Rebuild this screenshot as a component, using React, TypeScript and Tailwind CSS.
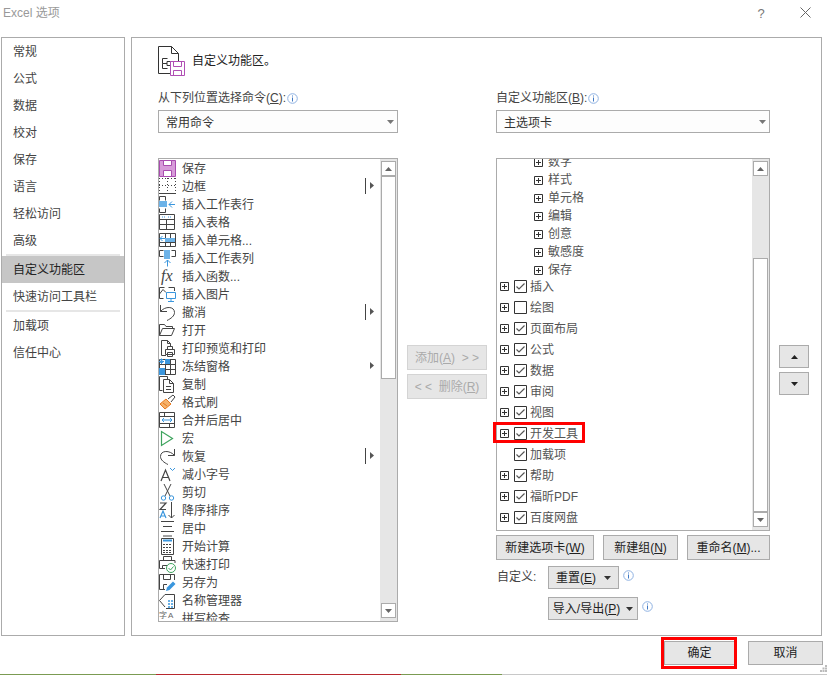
import React from 'react';

const D = '#444444';
const B = '#3a96dd';

const Svg = ({ children }: { children: React.ReactNode }) => (
  <svg width="17" height="17" viewBox="0 0 17 17" fill="none" stroke={D} strokeWidth="1" className="shrink-0">
    {children}
  </svg>
);

const icons: Record<string, React.ReactNode> = {
  save: (
    <>
      <path d="M0.5 0.5H16.5V16.5H0.5Z" fill="#d79bd9" stroke="#a94caf" />
      <path d="M4.5 0.5H12.5V5.5H4.5ZM4.5 10.5H12.5V16.5H4.5Z" fill="#fff" stroke="#a94caf" />
    </>
  ),
  border: (
    <>
      <path d="M0 0.500H17M0 7.500H17M0.500 0V14M8.500 0V14M16.500 0V14" strokeDasharray="1 2" shapeRendering="crispEdges" />
      <path d="M0 15.500H17" />
    </>
  ),
  insertRow: (
    <>
      <path d="M6.500 4.500V0.500H0.500V4.500M6.500 12.500V16.500H0.500V12.500" />
      <path d="M0 5H8V11H0Z" fill="#6db3e8" stroke="none" />
      <path d="M16 8.500H10M13 5.500L10 8.500L13 11.500" stroke={B} />
    </>
  ),
  insertTable: (
    <>
      <path d="M0.500 0.500H15.500V15.500H0.500ZM0.500 5.500H15.500M0.500 10.500H15.500M7.500 5.500V15.500" />
      <path d="M3 3H7M9 3H13" stroke={B} strokeDasharray="1 1" />
    </>
  ),
  insertCell: (
    <>
      <path d="M0.500 1.500H16.500V14.500H0.500ZM0.500 10.500H16.500M6.500 1.500V14.500M11.500 1.500V14.500" />
      <path d="M6 6H16V10H6Z" fill="#6db3e8" stroke="none" />
      <path d="M6 6.500H1M3.500 4L1 6.500L3.500 9" stroke={B} />
    </>
  ),
  insertCol: (
    <>
      <path d="M4.500 0.500H0.500V6.500H4.500M12.500 0.500H16.500V6.500H12.500" />
      <path d="M5 0H11V9H5Z" fill="#6db3e8" stroke="none" />
      <path d="M8.500 16.500V10M5.500 13L8.500 10L11.500 13" stroke={B} />
    </>
  ),
  fx: (
    <text x="2" y="13" fontFamily="'Liberation Serif', serif" fontStyle="italic" fontSize="16" fill={D} stroke="none">
      fx
    </text>
  ),
  picture: (
    <>
      <path d="M5.500 1.500H0.500V12.500H4.500M9.500 1.500H15.500V5M0.500 8L4 3.500L7 6.500" />
      <path d="M7.500 6.500H16.500V12.500H7.500ZM12 12.500V15M9 15.500H15" stroke={B} />
    </>
  ),
  undo: <path d="M1.500 1V7.500H8M1.500 7.500C6 2 15.500 2 15.500 8.500C15.500 12 12 14.500 8 16.500" />,
  open: <path d="M0.500 13.500V2.500H5.500L7 4.500H13.500V6.500M0.500 13.500H12.500L15.500 6.500H3.500L0.500 13.500Z" />,
  print: (
    <>
      <path d="M7 15.500H2.500V0.500H8.500L11.500 3.500V6M8.500 0.500V3.500H11.500" />
      <path d="M6.500 9.500H15.500V14.500H6.500ZM8.500 9.500V6.500H13.500V9.500M8.500 12.500H13.500V16.500H8.500Z" fill="#fff" />
    </>
  ),
  freeze: (
    <>
      <path d="M0.500 1.500H16.500V16.500H0.500ZM0.500 6.500H16.500M0.500 11.500H16.500M6.500 1.500V16.500M11.500 1.500V16.500" />
      <path d="M0 10H6V17H0Z" fill={B} stroke="none" />
      <path d="M0 3.500H5M2.500 0.500V6M1 1L4 5M4 1L1 5" stroke={B} />
      <path d="M6 1H11V6H6Z" fill={B} stroke="none" />
    </>
  ),
  copy: (
    <>
      <path d="M3.500 14.500H0.500V0.500H8.500V3" />
      <path d="M4.500 3.500H10.500L14.500 7.500V16.500H4.500ZM10.500 3.500V7.500H14.500M7 10.500H12M7 13.500H12" fill="#fff" />
    </>
  ),
  brush: (
    <>
      <path d="M1 10L7 5L12 10L6 15Z" fill="#f5b26b" stroke="#e8791e" />
      <path d="M4 9L8 12" stroke="#e8791e" />
      <path d="M9 5L14 1L16 3L12 8" fill="#fff" />
    </>
  ),
  merge: (
    <>
      <path d="M0.500 0.500H15.500V15.500H0.500ZM0.500 4.500H15.500M0.500 11.500H15.500M5.500 0.500V4.500M10.500 11.500V15.500" />
      <path d="M1 5H15V11H1Z" fill="#fff" stroke="none" />
      <path d="M3 8H13M5 6L3 8L5 10M11 6L13 8L11 10" stroke={B} />
    </>
  ),
  macro: <path d="M2.500 1.500V15.500L13.500 8.500Z" stroke="#3da35d" strokeWidth="1.2" />,
  redo: <path d="M15.500 1V7.500H9M15.500 7.500C11 2 1.500 2 1.500 8.500C1.500 12 5 14.500 9 16.500" />,
  fontDown: (
    <>
      <path d="M2 15L6.500 4L11 15M3.500 11.500H9.500" strokeWidth="1.2" />
      <path d="M11 2L13.500 4.500L16 2" stroke={B} />
    </>
  ),
  cut: (
    <>
      <path d="M5 0L11 12M12 0L6 12" />
      <circle cx="4.500" cy="14" r="2.200" stroke={B} />
      <circle cx="12.500" cy="14" r="2.200" stroke={B} />
    </>
  ),
  sortDesc: (
    <>
      <path d="M1 1H7L1 7.500H7" strokeWidth="1.2" />
      <path d="M1 16L4 9L7 16M2 14H6" stroke={B} strokeWidth="1.2" />
      <path d="M12.500 0V16M9.500 13L12.500 16L15.500 13" />
    </>
  ),
  center: <path d="M2 1.500H15M4 6.500H13M2 11.500H15M4 16H13" />,
  calc: (
    <>
      <path d="M2.500 0.500H14.500V16.500H2.500Z" />
      <path d="M4 2.500H13" stroke={B} strokeWidth="2" />
      <path d="M4 6.500H13M4 9.500H13M4 12.500H13M4 14.500H13" strokeDasharray="2 1" />
    </>
  ),
  quickPrint: (
    <>
      <path d="M4.500 4V0.500H12.500V4M6 12.500H0.500V4.500H16V7M3.500 12.500V9.500H8" />
      <circle cx="12" cy="12" r="4.500" fill="#fff" stroke="#3da35d" />
      <path d="M9.500 12L11.500 14L14.500 10.500" stroke="#3da35d" />
    </>
  ),
  saveAs: (
    <>
      <path d="M6 15.500H0.500V0.500H15.500V6M4.500 0.500V5.500H11.500V0.500M4.500 15.500V10.500H8" />
      <path d="M7 17L8 13.500L14 7.500L16.500 10L10.500 16Z" fill={B} stroke="none" />
    </>
  ),
  names: (
    <>
      <path d="M6 2.500L0.500 8.500L6 15M6 2.500H15.500V16.500H7" />
      <path d="M9 9H11M12 9H14M9 12H11M12 12H14M9 15H11M12 15H14" stroke={B} strokeWidth="1.500" />
    </>
  ),
  spell: (
    <>
      <text x="0" y="8" fontFamily="'Noto Sans CJK SC', sans-serif" fontSize="8" fill="#666" stroke="none">字</text>
      <text x="9" y="8" fontFamily="'Liberation Sans', sans-serif" fontSize="8" fill="#666" stroke="none">A</text>
      <path d="M5 14L7 16L11 11" stroke="#3da35d" />
    </>
  ),
};

const commands: [string, string, ('bar' | 'arrow')?][] = [
  ['save', '保存'],
  ['border', '边框', 'bar'],
  ['insertRow', '插入工作表行'],
  ['insertTable', '插入表格'],
  ['insertCell', '插入单元格...'],
  ['insertCol', '插入工作表列'],
  ['fx', '插入函数...'],
  ['picture', '插入图片'],
  ['undo', '撤消', 'bar'],
  ['open', '打开'],
  ['print', '打印预览和打印'],
  ['freeze', '冻结窗格', 'arrow'],
  ['copy', '复制'],
  ['brush', '格式刷'],
  ['merge', '合并后居中'],
  ['macro', '宏'],
  ['redo', '恢复', 'bar'],
  ['fontDown', '减小字号'],
  ['cut', '剪切'],
  ['sortDesc', '降序排序'],
  ['center', '居中'],
  ['calc', '开始计算'],
  ['quickPrint', '快速打印'],
  ['saveAs', '另存为'],
  ['names', '名称管理器'],
  ['spell', '拼写检查'],
];

const groups = ['数字', '样式', '单元格', '编辑', '创意', '敏感度', '保存'];

const tabs: [string, boolean, boolean][] = [
  ['插入', true, true],
  ['绘图', false, true],
  ['页面布局', true, true],
  ['公式', true, true],
  ['数据', true, true],
  ['审阅', true, true],
  ['视图', true, true],
  ['开发工具', true, true],
  ['加载项', true, false],
  ['帮助', true, true],
  ['福昕PDF', true, true],
  ['百度网盘', true, true],
];

const Info = () => (
  <svg width="11" height="11" viewBox="0 0 11 11" fill="none" className="shrink-0">
    <circle cx="5.500" cy="5.500" r="4.800" stroke="#8fb2e2" />
    <path d="M5.500 2.500V3.500M5.500 4.500V8.500" stroke="#3f78c4" />
  </svg>
);

const Plus = () => (
  <svg width="9" height="9" viewBox="0 0 9 9" fill="none" stroke="#333" className="shrink-0">
    <path d="M0.500 0.500H8.500V8.500H0.500ZM2 4.500H7M4.500 2V7" />
  </svg>
);

const Check = ({ on }: { on: boolean }) => (
  <svg width="13" height="13" viewBox="0 0 13 13" fill="none" className="shrink-0">
    <path d="M0.500 0.500H12.500V12.500H0.500Z" stroke="#333" fill="#fff" />
    {on && <path d="M2.500 6.500L5 9L10.500 3.500" stroke="#555" strokeWidth="1.2" />}
  </svg>
);

const Caret = ({ up, color = '#666' }: { up?: boolean; color?: string }) => (
  <svg width="7" height="4" viewBox="0 0 7 4" fill={color} className="shrink-0">
    <path d={up ? 'M3.500 0L7 4H0Z' : 'M0 0H7L3.500 4Z'} />
  </svg>
);

const Select = ({ text }: { text: string }) => (
  <div className="h-[23px] border border-[#ababab] bg-[#fdfdfd] flex items-center justify-between pl-[7px] pr-[3px] text-[#333]">
    <span className="pt-[2px]">{text}</span>
    <Caret color="#777" />
  </div>
);

const Scrollbar = ({ thumbFirst, thumbH }: { thumbFirst: boolean; thumbH: number }) => (
  <div className="w-[17px] shrink-0 bg-[#e6e6e6] flex flex-col items-center pt-[2px] pb-[3px] self-stretch">
    <div className="h-[15px] w-[15px] border border-[#ababab] bg-white flex items-center justify-center shrink-0">
      <Caret up />
    </div>
    {thumbFirst ? (
      <>
        <div className="w-[15px] border border-[#ababab] bg-white shrink-0" style={{ height: thumbH }} />
        <div className="flex-1" />
      </>
    ) : (
      <>
        <div className="flex-1" />
        <div className="w-[15px] border border-[#ababab] bg-white shrink-0" style={{ height: thumbH }} />
      </>
    )}
    <div className="h-[15px] w-[15px] border border-[#ababab] bg-white flex items-center justify-center shrink-0">
      <Caret />
    </div>
  </div>
);

const Btn = ({ className, children }: { className: string; children: React.ReactNode }) => (
  <div className={`h-[25px] border border-[#ababab] bg-[#e6e6e6] flex items-center justify-center text-[#222] ${className}`}>
    {children}
  </div>
);

const SideItem = ({ text, active }: { text: string; active?: boolean }) => (
  <div className={`h-[27px] flex items-center pl-[11px] pt-[1px] ${active ? 'bg-[#c6c6c6] text-[#222]' : 'text-[#444]'}`}>{text}</div>
);

const Divider = () => <div className="h-[2px] mx-[4px] bg-[#e6e6e6]" />;

export default function App() {
  return (
    <div className="relative w-[827px] h-[675px] overflow-hidden bg-white text-[12px] leading-none font-['Liberation_Sans','Noto_Sans_CJK_SC',sans-serif]">
      {/* title bar */}
      <div className="h-[37px] flex items-start justify-between pl-[3px] pt-[7px] text-[#999]">
        <span>Excel 选项</span>
        <div className="flex items-start">
          <span className="w-[14px] text-center text-[#777] text-[13px] mr-[32px]">?</span>
          <svg width="11" height="11" viewBox="0 0 11 11" stroke="#666" className="mr-[16px]">
            <path d="M0.500 0.500L10.500 10.500M10.500 0.500L0.500 10.500" />
          </svg>
        </div>
      </div>

      <div className="h-[599px] flex pl-[1px] gap-[6px]">
        {/* sidebar */}
        <div className="w-[124px] border border-[#ababab]">
          <SideItem text="常规" />
          <SideItem text="公式" />
          <SideItem text="数据" />
          <SideItem text="校对" />
          <SideItem text="保存" />
          <SideItem text="语言" />
          <SideItem text="轻松访问" />
          <SideItem text="高级" />
          <Divider />
          <SideItem text="自定义功能区" active />
          <SideItem text="快速访问工具栏" />
          <Divider />
          <SideItem text="加载项" />
          <SideItem text="信任中心" />
        </div>

        {/* main panel */}
        <div className="w-[691px] border border-[#ababab] pl-[26px] pt-[8px]">
          <div className="h-[33px] flex items-start gap-[6px]">
            <svg width="28" height="31" viewBox="0 0 28 31" fill="none" stroke="#333" className="shrink-0">
              <path d="M0.500 27.500V0.500H13.500L20.500 7.500V15M13.500 0.500V7.500H20.500M0.500 27.500H12" />
              <path d="M9.500 12.500H4.500V17.500M9.500 22.500H4.500V17.500M4.500 17.500H9M9 15.500H12.500V19.500H9Z" />
              <path d="M12.500 15.500H26.500V29.500H12.500Z" fill="#fff" stroke="#b04fb4" />
              <path d="M15.500 15.500H23.500V20.500H15.500ZM15.500 24.500H23.500V29.500H15.500Z" stroke="#b04fb4" />
            </svg>
            <span className="mt-[9px] text-[#222]">自定义功能区。</span>
          </div>

          <div className="flex mt-[11px]">
            {/* left column */}
            <div className="w-[240px] shrink-0">
              <div className="h-[20px] flex items-center gap-[1px] pb-[4px] text-[#444]">
                <span>
                  从下列位置选择命令(<u>C</u>):
                </span>
                <Info />
              </div>
              <Select text="常用命令" />
              <div className="mt-[25px] h-[464px] border border-[#ababab] flex overflow-hidden">
                <div className="flex-1 min-w-0 text-[#444]">
                  {commands.map(([icon, label, sub]) => (
                    <div key={label} className="relative h-[18px] flex items-center">
                      <Svg>{icons[icon]}</Svg>
                      <span className="ml-[6px] pt-[2px]">{label}</span>
                      {sub === 'bar' && <div className="absolute left-[206px] top-[1px] h-[16px] w-px bg-[#444]" />}
                      {sub && (
                        <svg width="4" height="7" viewBox="0 0 4 7" fill="#555" className="absolute left-[211px] top-[5px]">
                          <path d="M0 0L4 3.500L0 7Z" />
                        </svg>
                      )}
                    </div>
                  ))}
                </div>
                <Scrollbar thumbFirst thumbH={203} />
              </div>
            </div>

            {/* add / remove */}
            <div className="w-[98px] shrink-0 pl-[9px] pt-[255px] flex flex-col gap-[4px] text-[#aaa]">
              <div className="h-[25px] w-[80px] border border-[#d4d4d4] bg-[#e6e6e6] flex items-center justify-center">
                添加(<u>A</u>)&nbsp;&nbsp;&gt; &gt;
              </div>
              <div className="h-[25px] w-[80px] border border-[#d4d4d4] bg-[#e6e6e6] flex items-center justify-center">
                &lt; &lt;&nbsp;&nbsp;删除(<u>R</u>)
              </div>
            </div>

            {/* right column */}
            <div className="w-[274px] shrink-0">
              <div className="h-[20px] flex items-center gap-[1px] pb-[4px] text-[#444]">
                <span>
                  自定义功能区(<u>B</u>):
                </span>
                <Info />
              </div>
              <Select text="主选项卡" />
              <div className="mt-[25px] h-[373px] border border-[#ababab] flex overflow-hidden">
                <div className="flex-1 min-w-0 text-[#555]">
                  <div className="-mt-[6px]">
                    {groups.map((g) => (
                      <div key={g} className="h-[18px] flex items-center pl-[37px] gap-[5px]">
                        <Plus />
                        <span>{g}</span>
                      </div>
                    ))}
                  </div>
                  <div className="-mt-[3px]">
                    {tabs.map(([t, on, plus]) => (
                      <div key={t} className="h-[21px] flex items-center pl-[3px]">
                        <div className="w-[9px] mr-[5px] shrink-0">{plus && <Plus />}</div>
                        <Check on={on} />
                        <span className="ml-[3px]">{t}</span>
                      </div>
                    ))}
                  </div>
                </div>
                <Scrollbar thumbFirst={false} thumbH={254} />
              </div>

              <div className="flex gap-[9px] mt-[4px]">
                <Btn className="w-[98px]">
                  <span>
                    新建选项卡(<u>W</u>)
                  </span>
                </Btn>
                <Btn className="w-[75px]">
                  <span>
                    新建组(<u>N</u>)
                  </span>
                </Btn>
                <Btn className="w-[83px]">
                  <span>
                    重命名(<u>M</u>)...
                  </span>
                </Btn>
              </div>

              <div className="flex items-start mt-[6px]">
                <span className="w-[52px] pl-[1px] pt-[5px] text-[#444]">自定义:</span>
                <div>
                  <div className="flex items-start gap-[4px]">
                    <div className="h-[23px] w-[71px] border border-[#ababab] bg-[#e6e6e6] flex items-center justify-center gap-[8px] text-[#222]">
                      <span>
                        重置(<u>E</u>)
                      </span>
                      <Caret color="#333" />
                    </div>
                    <div className="mt-[4px]">
                      <Info />
                    </div>
                  </div>
                  <div className="flex items-start gap-[4px] mt-[8px]">
                    <div className="h-[23px] w-[90px] border border-[#ababab] bg-[#e6e6e6] flex items-center justify-center gap-[6px] text-[#222]">
                      <span>
                        导入/导出(<u>P</u>)
                      </span>
                      <Caret color="#333" />
                    </div>
                    <div className="mt-[4px]">
                      <Info />
                    </div>
                  </div>
                </div>
              </div>
            </div>

            {/* move up / down */}
            <div className="pl-[9px] pt-[255px] flex flex-col gap-[4px]">
              <div className="h-[23px] w-[30px] border border-[#ababab] bg-[#e6e6e6] flex items-center justify-center">
                <Caret up color="#222" />
              </div>
              <div className="h-[23px] w-[30px] border border-[#ababab] bg-[#e6e6e6] flex items-center justify-center">
                <Caret color="#222" />
              </div>
            </div>
          </div>
        </div>
      </div>

      {/* footer */}
      <div className="flex justify-end gap-[13px] pr-[4px] mt-[5px]">
        <div className="relative">
          <div className="h-[24px] w-[71px] border border-[#ababab] bg-[#e6e6e6] flex items-center justify-center text-[#222]">确定</div>
          <div className="absolute -left-[3px] -top-[4px] w-[76px] h-[32px] border-[3px] border-[#ff0000]" />
        </div>
        <div className="h-[24px] w-[75px] border border-[#ababab] bg-[#e6e6e6] flex items-center justify-center text-[#222]">取消</div>
      </div>

      {/* red box over the developer tab */}
      <div className="absolute left-[493px] top-[422px] w-[92px] h-[21px] border-[3px] border-[#ff0000]" />

      {/* resize grip */}
      <svg width="7" height="7" viewBox="0 0 7 7" fill="#bbb" className="absolute right-0 bottom-[3px]">
        <path d="M5 0H7V2H5ZM2.500 2.500H4.500V4.500H2.500ZM5 2.500H7V4.500H5ZM0 5H2V7H0ZM2.500 5H4.500V7H2.500ZM5 5H7V7H5Z" />
      </svg>

      {/* sliver of the window behind */}
      <div className="absolute left-0 right-0 bottom-0 h-px flex">
        <div className="w-[156px] bg-[#7b9b52]" />
        <div className="w-[245px] bg-[#b8282e]" />
        <div className="w-[101px] bg-[#7b9b52]" />
        <div className="flex-1 bg-[#c8c8c8]" />
      </div>
    </div>
  );
}
